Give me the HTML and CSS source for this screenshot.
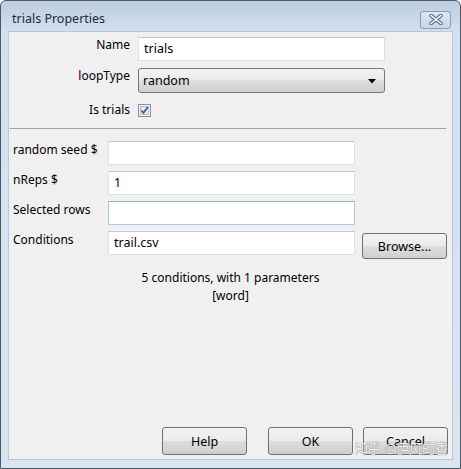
FILE: index.html
```html
<!DOCTYPE html>
<html>
<head>
<meta charset="utf-8">
<link rel="stylesheet" href="styles.css">
</head>
<body>
<div class="window">
  <div class="titlebar">
    <span class="title">trials Properties</span>
    <span class="close">
      <svg width="16" height="11" viewBox="0 0 16 11">
        <path d="M3 1.5 L13 9.5 M13 1.5 L3 9.5" stroke="#5f6f83" stroke-width="3.6" stroke-linecap="round"/>
        <path d="M3 1.5 L13 9.5 M13 1.5 L3 9.5" stroke="#ffffff" stroke-width="1.6" stroke-linecap="round"/>
      </svg>
    </span>
  </div>
  <div class="panel">
    <div class="top">
      <div class="frow">
        <label class="rlabel">Name</label>
        <div class="field">trials</div>
      </div>
      <div class="frow">
        <label class="rlabel">loopType</label>
        <div class="select">
          <span>random</span>
          <svg class="arrow" width="8" height="5" viewBox="0 0 8 5"><path d="M0 0 H8 L4 4.5 Z" fill="#000"/></svg>
        </div>
      </div>
      <div class="frow crow">
        <label class="rlabel">Is trials</label>
        <span class="check">
          <svg width="13" height="13" viewBox="0 0 13 13">
            <rect x="0.5" y="0.5" width="12" height="12" fill="#f4f4f4" stroke="#8e8f8f"/>
            <rect x="2.5" y="2.5" width="8" height="8" fill="#dfe6ef" stroke="#b4bfcc"/>
            <path d="M3.5 6.5 L5.5 9 L9.8 3" stroke="#3c5a82" stroke-width="1.6" fill="none"/>
          </svg>
        </span>
      </div>
    </div>
    <div class="sep"></div>
    <div class="mid">
      <div class="mrow">
        <label class="llabel">random seed $</label>
        <div class="field wide"></div>
      </div>
      <div class="mrow">
        <label class="llabel">nReps $</label>
        <div class="field wide">1</div>
      </div>
      <div class="mrow">
        <label class="llabel">Selected rows</label>
        <div class="field wide focus"></div>
      </div>
      <div class="mrow">
        <label class="llabel">Conditions</label>
        <div class="field wide">trail.csv</div>
        <button class="btn browse">Browse...</button>
      </div>
    </div>
    <div class="info">5 conditions, with 1 parameters<br>[word]</div>
    <div class="buttons">
      <button class="btn help">Help</button>
      <button class="btn ok">OK</button>
      <button class="btn cancel">Cancel</button>
      <span class="watermark">知乎 @伊风的香</span>
    </div>
  </div>
</div>
</body>
</html>
```

FILE: styles.css
```css
* { box-sizing: border-box; }
html, body { margin: 0; padding: 0; }
body {
  width: 461px;
  height: 469px;
  overflow: hidden;
  background: #ffffff;
  font-family: "Noto Sans", "Open Sans", "Noto Sans CJK SC", sans-serif;
  font-size: 12px;
  color: #000;
}
.window {
  width: 461px;
  height: 469px;
  border: 1px solid #4d5866;
  border-radius: 6px 6px 0 0;
  background: linear-gradient(#bccde0 0, #d3e0ee 30px, #d9e5f1 100%);
  display: flex;
  flex-direction: column;
}
.titlebar {
  height: 29px;
  display: flex;
  align-items: center;
  justify-content: space-between;
  padding: 0 9px 0 11px;
  flex: none;
}
.title {
  font-size: 12.5px;
  color: #1e2a38;
  margin-top: 6px;
}
.close {
  width: 31px;
  height: 18px;
  border: 1px solid #8a9ab0;
  border-radius: 3px;
  background: linear-gradient(#dde7f2, #c9d7e7);
  display: flex;
  align-items: center;
  justify-content: center;
  margin-top: 8px;
}
.panel {
  flex: 1;
  margin: 1px 7px 8px 7px;
  background: #f0f0f0;
  border: 1px solid #b9c8d9;
  display: flex;
  flex-direction: column;
  position: relative;
}
.top {
  padding: 5px 0 0 0;
  display: flex;
  flex-direction: column;
  gap: 7px;
}
.frow {
  display: flex;
  align-items: flex-start;
}
.rlabel {
  width: 121px;
  text-align: right;
  line-height: 16px;
}
.frow .field, .frow .select { margin-left: 8px; }
.field {
  width: 247px;
  height: 24px;
  background: #fff;
  border: 1px solid #dde1e6;
  border-top-color: #c4c8cd;
  padding: 0 5px;
  line-height: 22px;
  font-size: 12.5px;
}
.field.focus { border-color: #a9c6e4; border-top-color: #8cb1d8; }
.select {
  width: 247px;
  height: 25px;
  border: 1px solid #777;
  border-radius: 3px;
  background: linear-gradient(#f3f3f3 0, #ebebeb 45%, #dcdcdc 55%, #cfcfcf 100%);
  display: flex;
  align-items: center;
  justify-content: space-between;
  padding: 0 8px 0 4px;
  font-size: 12.5px;
}
.arrow { margin-top: 2px; }
.crow { margin-top: 2px; }
.check {
  margin-left: 8px;
  height: 13px;
  margin-top: 2px;
  display: flex;
}
.sep {
  margin: 10px 6px 0 1px;
  height: 1px;
  background: #a0a0a0;
}
.mid {
  padding: 12px 0 0 4px;
  display: flex;
  flex-direction: column;
  gap: 6px;
}
.mrow {
  display: flex;
  align-items: flex-start;
}
.llabel {
  width: 95px;
  line-height: 16px;
  margin-top: 1px;
}
.btn {
  font-family: inherit;
  font-size: 12.5px;
  color: #000;
  border: 1px solid #707070;
  border-radius: 3px;
  background: linear-gradient(#f2f2f2 0, #ebebeb 48%, #dddddd 52%, #cfcfcf 100%);
  padding: 0;
  margin: 0;
}
.browse {
  width: 85px;
  height: 26px;
  margin-left: 7px;
  margin-top: 2px;
}
.info {
  text-align: center;
  margin-top: 10px;
  line-height: 18px;
}
.buttons {
  margin-top: auto;
  display: flex;
  justify-content: flex-end;
  padding: 0 4px 4px 0;
  position: relative;
}
.buttons .btn {
  width: 85px;
  height: 28px;
}
.help { margin-right: 21px; }
.ok { margin-right: 10px; }
.watermark {
  position: absolute;
  right: 4px;
  bottom: 2px;
  font-size: 13px;
  color: rgba(255,255,255,0.9);
  text-shadow: 0 0 1px #888, 0 0 1px #888;
}
```
